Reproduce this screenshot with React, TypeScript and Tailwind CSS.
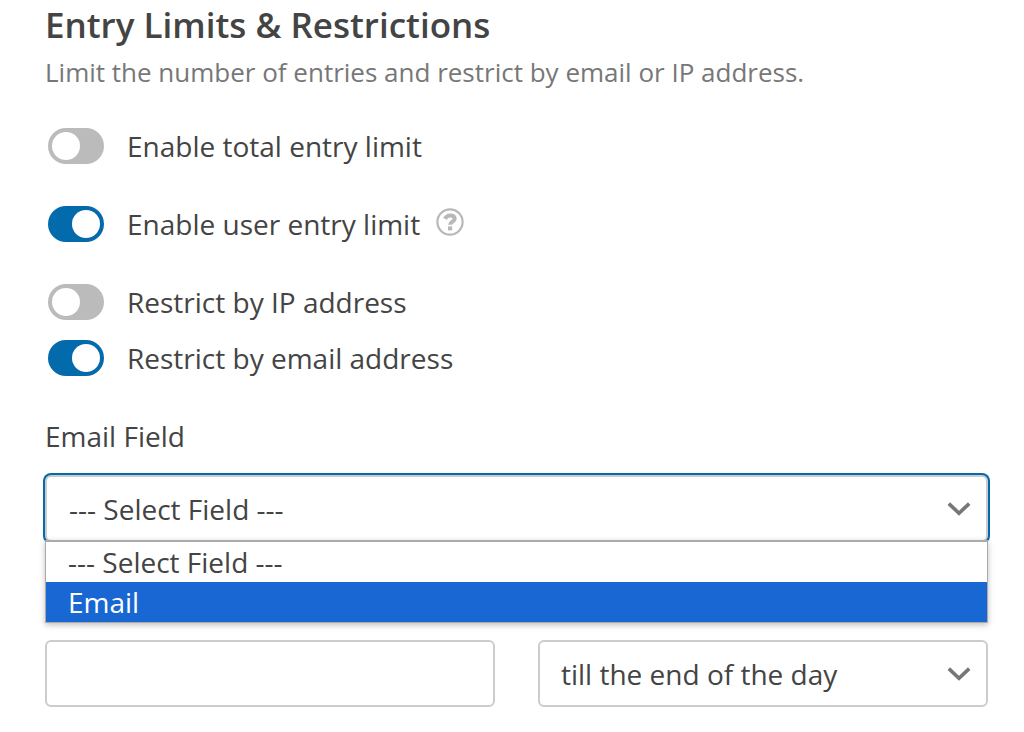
import { useState } from 'react'
import clsx from 'clsx'

interface ToggleRowProps {
  id: string
  label: string
  checked: boolean
  onChange: (checked: boolean) => void
  help?: boolean
}

const fieldOptions = [
  { value: '', label: '--- Select Field ---' },
  { value: 'email', label: 'Email' },
]

const periodOptions = ['till the end of the day', 'till the end of the week', 'till the end of the month']

function Chevron() {
  return (
    <svg
      viewBox="0 0 24 14"
      className="pointer-events-none absolute right-[17px] top-1/2 h-[14px] w-6 -translate-y-1/2"
      fill="none"
      stroke="#777777"
      strokeWidth="3.6"
      aria-hidden="true"
    >
      <path d="M1.8 1.6 12 11.2 22.2 1.6" />
    </svg>
  )
}

function HelpIcon() {
  return (
    <svg viewBox="0 0 28 28" className="size-7" fill="none" stroke="#b8b8b8" aria-hidden="true">
      <circle cx="14" cy="14" r="12.6" strokeWidth="2.2" />
      <path d="M9 10.8C10.2 8.3 11.8 7.4 14.1 7.4c2.8 0 4.6 1.3 4.6 3.3 0 3-4.6 2.9-4.6 6.1" strokeWidth="4" />
      <path d="M12 20.4h4.2" strokeWidth="4" />
    </svg>
  )
}

function ToggleRow({ id, label, checked, onChange, help }: ToggleRowProps) {
  return (
    <div className="flex h-9 items-center pl-[3px]">
      <input
        id={id}
        type="checkbox"
        role="switch"
        checked={checked}
        onChange={(e) => onChange(e.target.checked)}
        className="flex h-9 w-14 shrink-0 cursor-pointer appearance-none items-center rounded-full bg-[#bbbbbb] px-1 before:size-7 before:rounded-full before:bg-white checked:justify-end checked:bg-[#036aab]"
      />
      <label htmlFor={id} className="ml-[23px] cursor-pointer text-[28px] leading-9">
        {label}
      </label>
      {help && (
        <button type="button" aria-label="Help" className="mb-1 ml-4 cursor-pointer">
          <HelpIcon />
        </button>
      )}
    </div>
  )
}

export default function App() {
  const [totalLimit, setTotalLimit] = useState(false)
  const [userLimit, setUserLimit] = useState(true)
  const [byIp, setByIp] = useState(false)
  const [byEmail, setByEmail] = useState(true)
  const [field, setField] = useState('')
  const [isOpen, setIsOpen] = useState(true)
  const [highlighted, setHighlighted] = useState('email')
  const [count, setCount] = useState('')
  const [period, setPeriod] = useState(periodOptions[0])

  const pickField = (value: string) => {
    setField(value)
    setIsOpen(false)
  }

  return (
    <main className="bg-white pb-6 pl-[45px] pr-9 font-['Open_Sans','Noto_Sans',sans-serif] text-[#444444]">
      <h2 className="text-[35px] font-semibold leading-[50px]">Entry Limits &amp; Restrictions</h2>
      <p className="mt-1 text-[26px] leading-9 text-[#777777]">
        Limit the number of entries and restrict by email or IP address.
      </p>

      <div className="mt-[38px] flex flex-col">
        <ToggleRow id="total-limit" label="Enable total entry limit" checked={totalLimit} onChange={setTotalLimit} />
        <div className="mt-[42px]">
          <ToggleRow id="user-limit" label="Enable user entry limit" checked={userLimit} onChange={setUserLimit} help />
        </div>
        <div className="mt-[42px] flex flex-col gap-5">
          <ToggleRow id="by-ip" label="Restrict by IP address" checked={byIp} onChange={setByIp} />
          <ToggleRow id="by-email" label="Restrict by email address" checked={byEmail} onChange={setByEmail} />
        </div>
      </div>

      <label htmlFor="email-field" className="mt-[42px] block text-[28px] leading-9">
        Email Field
      </label>
      <div className="relative mt-[21px]">
        <select
          id="email-field"
          value={field}
          onChange={(e) => setField(e.target.value)}
          className={clsx(
            'block h-[67px] w-full appearance-none rounded-md border-2 border-[#cccccc] bg-white pl-[22px] pr-14 text-[28px] outline-none',
            isOpen && 'ring-2 ring-[#036aab]'
          )}
        >
          {fieldOptions.map((option) => (
            <option key={option.value} value={option.value}>{option.label}</option>
          ))}
        </select>
        <Chevron />

        {/* Option list under the field */}
        {isOpen && (
          <ul
            role="listbox"
            aria-label="Email Field"
            className="absolute inset-x-0 top-full -mt-0.5 border border-t-2 border-[#aaaaaa] bg-white text-[28px] leading-10 shadow-[0_2px_6px_rgba(0,0,0,0.25)]"
          >
            {fieldOptions.map((option) => (
              <li
                key={option.value}
                role="option"
                aria-selected={option.value === highlighted}
                onMouseEnter={() => setHighlighted(option.value)}
                onClick={() => pickField(option.value)}
                className={clsx(
                  'cursor-default pl-[22px]',
                  option.value === highlighted && 'bg-[#1967d2] text-white'
                )}
              >
                {option.label}
              </li>
            ))}
          </ul>
        )}
      </div>

      <div className="mt-[98px] grid grid-cols-2 gap-[43px]">
        <input
          type="number"
          aria-label="Number of entries"
          value={count}
          onChange={(e) => setCount(e.target.value)}
          className="h-[67px] w-full appearance-none rounded-md border-2 border-[#cccccc] bg-white px-[22px] text-[28px] outline-none"
        />
        <div className="relative">
          <select
            aria-label="Period"
            value={period}
            onChange={(e) => setPeriod(e.target.value)}
            className="block h-[67px] w-full appearance-none rounded-md border-2 border-[#cccccc] bg-white pl-[21px] pr-14 text-[28px] outline-none"
          >
            {periodOptions.map((option) => (
              <option key={option}>{option}</option>
            ))}
          </select>
          <Chevron />
        </div>
      </div>
    </main>
  )
}
